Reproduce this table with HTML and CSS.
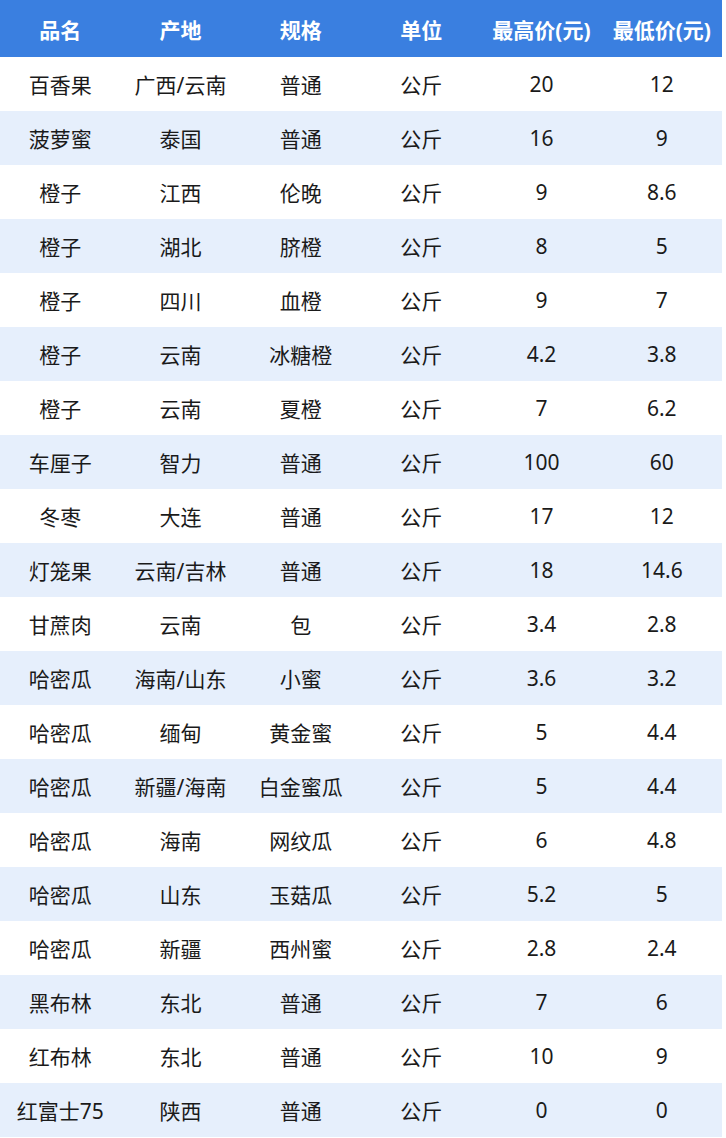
FILE: index.html
```html
<!DOCTYPE html>
<html lang="zh">
<head>
<meta charset="utf-8">
<link rel="stylesheet" href="styles.css">
</head>
<body>
<table class="price">
<thead>
<tr><th>品名</th><th>产地</th><th>规格</th><th>单位</th><th>最高价(元)</th><th>最低价(元)</th></tr>
</thead>
<tbody>
<tr><td>百香果</td><td>广西/云南</td><td>普通</td><td>公斤</td><td>20</td><td>12</td></tr>
<tr><td>菠萝蜜</td><td>泰国</td><td>普通</td><td>公斤</td><td>16</td><td>9</td></tr>
<tr><td>橙子</td><td>江西</td><td>伦晚</td><td>公斤</td><td>9</td><td>8.6</td></tr>
<tr><td>橙子</td><td>湖北</td><td>脐橙</td><td>公斤</td><td>8</td><td>5</td></tr>
<tr><td>橙子</td><td>四川</td><td>血橙</td><td>公斤</td><td>9</td><td>7</td></tr>
<tr><td>橙子</td><td>云南</td><td>冰糖橙</td><td>公斤</td><td>4.2</td><td>3.8</td></tr>
<tr><td>橙子</td><td>云南</td><td>夏橙</td><td>公斤</td><td>7</td><td>6.2</td></tr>
<tr><td>车厘子</td><td>智力</td><td>普通</td><td>公斤</td><td>100</td><td>60</td></tr>
<tr><td>冬枣</td><td>大连</td><td>普通</td><td>公斤</td><td>17</td><td>12</td></tr>
<tr><td>灯笼果</td><td>云南/吉林</td><td>普通</td><td>公斤</td><td>18</td><td>14.6</td></tr>
<tr><td>甘蔗肉</td><td>云南</td><td>包</td><td>公斤</td><td>3.4</td><td>2.8</td></tr>
<tr><td>哈密瓜</td><td>海南/山东</td><td>小蜜</td><td>公斤</td><td>3.6</td><td>3.2</td></tr>
<tr><td>哈密瓜</td><td>缅甸</td><td>黄金蜜</td><td>公斤</td><td>5</td><td>4.4</td></tr>
<tr><td>哈密瓜</td><td>新疆/海南</td><td>白金蜜瓜</td><td>公斤</td><td>5</td><td>4.4</td></tr>
<tr><td>哈密瓜</td><td>海南</td><td>网纹瓜</td><td>公斤</td><td>6</td><td>4.8</td></tr>
<tr><td>哈密瓜</td><td>山东</td><td>玉菇瓜</td><td>公斤</td><td>5.2</td><td>5</td></tr>
<tr><td>哈密瓜</td><td>新疆</td><td>西州蜜</td><td>公斤</td><td>2.8</td><td>2.4</td></tr>
<tr><td>黑布林</td><td>东北</td><td>普通</td><td>公斤</td><td>7</td><td>6</td></tr>
<tr><td>红布林</td><td>东北</td><td>普通</td><td>公斤</td><td>10</td><td>9</td></tr>
<tr><td>红富士75</td><td>陕西</td><td>普通</td><td>公斤</td><td>0</td><td>0</td></tr>
</tbody>
</table>
</body>
</html>
```
FILE: styles.css
```css
html, body {
  margin: 0;
  padding: 0;
  background: #ffffff;
}
.price {
  width: 722px;
  border-collapse: collapse;
  table-layout: fixed;
  font-family: "Noto Sans", "Noto Sans CJK SC", sans-serif;
  font-size: 21px;
  color: #1a1a1a;
}
.price th {
  height: 57px;
  padding: 0;
  background: #3a7fe0;
  color: #ffffff;
  font-size: 21px;
  font-weight: bold;
  text-align: center;
  vertical-align: middle;
  white-space: nowrap;
}
.price td {
  height: 54px;
  padding: 0;
  text-align: center;
  vertical-align: middle;
  white-space: nowrap;
}
.price tbody tr:nth-child(even) td {
  background: #e6effc;
}
```
